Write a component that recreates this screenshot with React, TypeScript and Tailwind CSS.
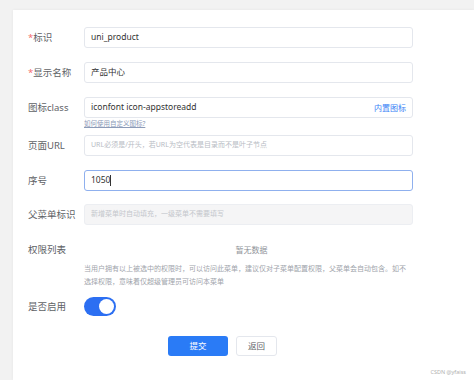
import React from "react";

const font = { fontFamily: '"Noto Sans", "Noto Sans CJK SC", sans-serif' };

function Label({ children, req }: { children: React.ReactNode; req?: boolean }) {
  return (
    <div className="w-[56px] shrink-0 text-[9.5px] leading-[21px] text-[#606266]">
      {req && <span className="text-[#f56c6c]">*</span>}
      {children}
    </div>
  );
}

export default function App() {
  return (
    <div
      className="relative w-[474px] h-[380px] overflow-hidden bg-[#f2f2f2] pt-[10px] pl-[13px]"
      style={font}
    >
      <div className="h-full bg-white pl-[15px] pt-[17px] shadow-[0_0_3px_rgba(0,0,0,0.06)]">
        {/* 标识 */}
        <div className="flex mb-[14px]">
          <Label req>标识</Label>
          <div className="w-[329px] h-[21px] rounded-[3px] border border-[#e4e7ed] px-[6px] flex items-center text-[8.5px] text-[#333]">
            uni_product
          </div>
        </div>
        {/* 显示名称 */}
        <div className="flex mb-[14px]">
          <Label req>显示名称</Label>
          <div className="w-[329px] h-[21px] rounded-[3px] border border-[#e4e7ed] px-[6px] flex items-center text-[8.5px] text-[#333]">
            产品中心
          </div>
        </div>
        {/* 图标class */}
        <div className="flex mb-[6px]">
          <Label>图标class</Label>
          <div className="flex flex-col">
            <div className="w-[329px] h-[21px] rounded-[3px] border border-[#e4e7ed] px-[6px] flex items-center justify-between text-[8.5px] text-[#333]">
              <span>iconfont icon-appstoreadd</span>
              <span className="text-[#3b82f6] text-[8px]">内置图标</span>
            </div>
            <div className="h-[11px] leading-[11px] text-[6.5px] text-[#8c9bb8] underline">
              如何使用自定义图标?
            </div>
          </div>
        </div>
        {/* 页面URL */}
        <div className="flex mb-[14px]">
          <Label>页面URL</Label>
          <div className="w-[329px] h-[21px] rounded-[3px] border border-[#e4e7ed] px-[6px] flex items-center text-[7px] text-[#b8bcc4]">
            URL必须是/开头，若URL为空代表是目录而不是叶子节点
          </div>
        </div>
        {/* 序号 */}
        <div className="flex mb-[13px]">
          <Label>序号</Label>
          <div className="w-[329px] h-[21px] rounded-[3px] border border-[#8fb0ee] px-[6px] flex items-center text-[8.5px] text-[#333]">
            1050<span className="inline-block w-px h-[11px] bg-[#333]" />
          </div>
        </div>
        {/* 父菜单标识 */}
        <div className="flex mb-[14px]">
          <Label>父菜单标识</Label>
          <div className="w-[329px] h-[21px] rounded-[3px] border border-[#eceef2] bg-[#f5f5f6] px-[6px] flex items-center text-[7px] text-[#c4c7cc]">
            新增菜单时自动填充，一级菜单不需要填写
          </div>
        </div>
        {/* 权限列表 */}
        <div className="flex">
          <Label>权限列表</Label>
          <div className="w-[329px] h-[21px] flex items-center justify-center text-[8px] text-[#909399] pl-[6px]">
            暂无数据
          </div>
        </div>
        <div className="flex mt-[2px] mb-[8px]">
          <div className="w-[56px] shrink-0" />
          <div className="w-[326px] text-[7px] leading-[13px] text-[#a0a4ab]">
            当用户拥有以上被选中的权限时，可以访问此菜单，建议仅对子菜单配置权限，父菜单会自动包含。如不选择权限，意味着仅超级管理员可访问本菜单
          </div>
        </div>
        {/* 是否启用 */}
        <div className="flex items-center h-[21px] mb-[19px]">
          <Label>是否启用</Label>
          <div className="w-[32px] h-[19px] rounded-full bg-[#2c6ff2] flex items-center justify-end pr-[2px]">
            <div className="w-[15px] h-[15px] rounded-full bg-white" />
          </div>
        </div>
        {/* buttons */}
        <div className="flex gap-[8px] pl-[140px]">
          <div className="w-[60px] h-[20px] rounded-[3px] bg-[#2a7bf6] text-white text-[8.5px] flex items-center justify-center">
            提交
          </div>
          <div className="w-[41px] h-[20px] rounded-[3px] border border-[#e4e7ed] bg-white text-[#606266] text-[8.5px] flex items-center justify-center">
            返回
          </div>
        </div>
      </div>
      <div className="absolute right-[8px] bottom-[4px] text-[5.5px] text-[#b0b0b0]">CSDN @yfaiss</div>
    </div>
  );
}
